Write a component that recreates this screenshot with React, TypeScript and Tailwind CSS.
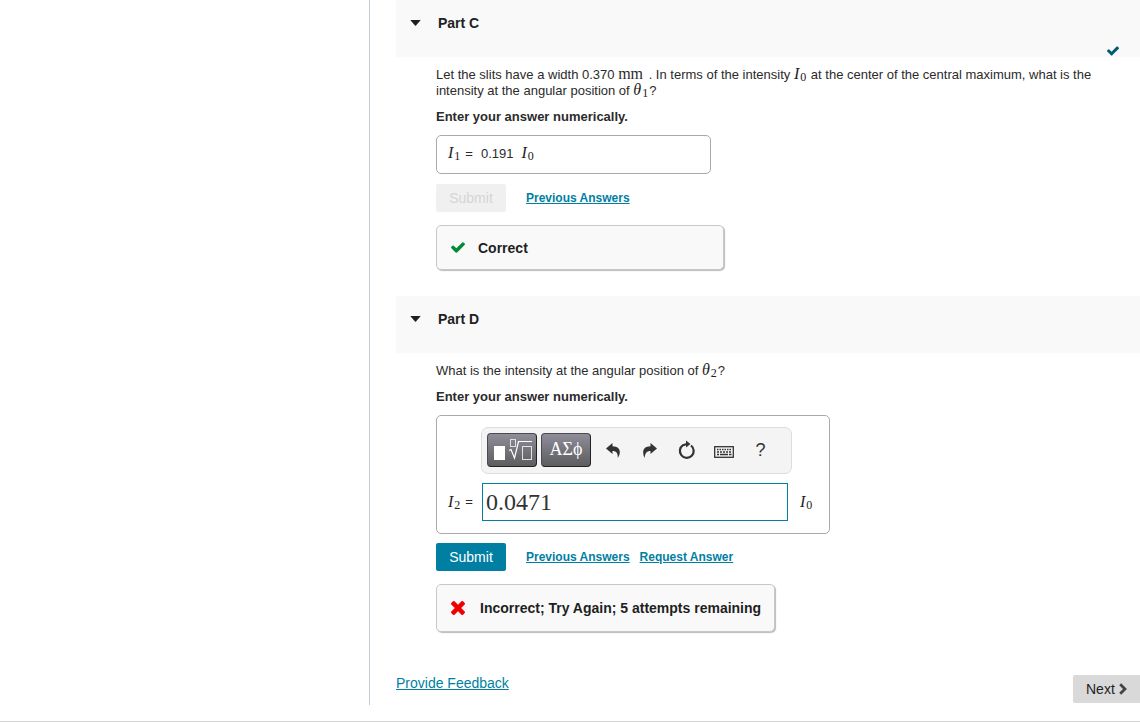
import React, { useState } from 'react';

function Caret() {
  return (
    <svg className="h-[6px] w-[11px] fill-[#1f1f1f]" viewBox="0 0 11 6" aria-hidden="true">
      <path d="M0.3 0H10.7L6 5.4Q5.5 5.9 5 5.4Z" />
    </svg>
  );
}

function Check({ className }: { className: string }) {
  return (
    <svg className={className} viewBox="121 334 1550 1188" aria-hidden="true">
      <path d="M1671 566q0 40-28 68l-724 724-136 136q-28 28-68 28t-68-28l-136-136-362-362q-28-28-28-68t28-68l136-136q28-28 68-28t68 28l294 295 656-657q28-28 68-28t68 28l136 136q28 28 28 68z" />
    </svg>
  );
}

function Cross({ className }: { className: string }) {
  return (
    <svg className={className} viewBox="302 366 1188 1188" aria-hidden="true">
      <path d="M1490 1322q0 40-28 68l-136 136q-28 28-68 28t-68-28l-294-294-294 294q-28 28-68 28t-68-28l-136-136q-28-28-28-68t28-68l294-294-294-294q-28-28-28-68t28-68l136-136q28-28 68-28t68 28l294 294 294-294q28-28 68-28t68 28l136 136q28 28 28 68t-28 68l-294 294 294 294q28 28 28 68z" />
    </svg>
  );
}

function Sym({ name, sub }: { name: string; sub: string }) {
  return (
    <span className="mr-px font-['Liberation_Serif',serif] text-base leading-[0] whitespace-nowrap text-[#222]">
      <i>{name}</i>
      <sub className="bottom-[-2px] ml-px text-[12px]">{sub}</sub>
    </span>
  );
}

function PartHeader({ title, done }: { title: string; done?: boolean }) {
  return (
    <div className="flex min-h-[57px] justify-between bg-[#f9f9f9] pr-[21px] pl-[14px]">
      <h2 className="pt-[13px]">
        <button type="button" aria-expanded="true" className="flex items-center gap-[17px] text-sm font-bold text-[#1f1f1f]">
          <Caret />
          {title}
        </button>
      </h2>
      {done && <Check className="mb-px h-[10px] w-3 self-end fill-[#005a70]" />}
    </div>
  );
}

function Feedback({ className, children }: { className: string; children: React.ReactNode }) {
  return (
    <div
      role="status"
      className={`mt-[13px] flex w-fit items-center rounded-[5px] border border-[#c8c8c8] bg-[#f9f9f9] pr-[13px] pl-[14px] text-sm font-bold text-[#1f1f1f] shadow-[1px_1px_1px_#bbb] ${className}`}
    >
      {children}
    </div>
  );
}

const linkStyle = 'text-[12px] leading-4 font-bold text-[#007fa3] underline';
const toolStyle = 'flex h-[34px] w-[37px] items-center justify-center text-[#333]';
const paletteStyle =
  'flex h-[34px] w-[50px] items-center justify-center rounded-[4px] border border-[#4a4a50] border-r-[#222] border-b-[#222] bg-linear-to-b from-[#8f8d99] to-[#5d5d5f] text-white';

function Toolbar({ onClear }: { onClear: () => void }) {
  return (
    <div role="toolbar" className="flex h-[47px] items-center rounded-[7px] border border-[#ddd] bg-[#f4f4f4] px-[5px] pb-px">
      <button type="button" aria-label="Templates" className={`${paletteStyle} mr-1`}>
        <svg width="42" height="24" viewBox="0 0 42 24" fill="none" stroke="white">
          <rect x="3" y="8" width="11" height="14" fill="white" stroke="none" />
          <rect x="19.500" y="1.500" width="5" height="7" strokeOpacity=".75" />
          <path d="M18 12.500l2-1 3.500 8.500 4-16.500H41" strokeWidth="1.200" />
          <rect x="31.500" y="8.500" width="9" height="13" strokeOpacity=".8" />
        </svg>
      </button>
      <button type="button" aria-label="Greek letters" className={`${paletteStyle} mr-[3px] pb-[2px] font-['Liberation_Serif','DejaVu_Serif',serif] text-lg`}>
        ΑΣϕ
      </button>
      <button type="button" aria-label="Undo" className={toolStyle}>
        <svg width="14" height="15" viewBox="0 0 14 15" fill="currentColor">
          <path d="M0 5.500L6.500 0V3.200C11.500 3.200 14 6 13.800 9.500C13.700 11.500 13 13 11.800 15C12 10.500 10.500 8 6.500 8V11Z" />
        </svg>
      </button>
      <button type="button" aria-label="Redo" className={toolStyle}>
        <svg width="14" height="15" viewBox="0 0 14 15" fill="currentColor">
          <path d="M14 5.500L7.500 0V3.200C2.500 3.200 0 6 .2 9.500C.3 11.500 .6 13 1.600 15C2 10.500 3.500 8 7.500 8V11Z" />
        </svg>
      </button>
      <button type="button" aria-label="Reset" onClick={onClear} className={toolStyle}>
        <svg width="18" height="20" viewBox="0 0 18 20" fill="none" stroke="currentColor">
          <path d="M13 5.500A6.900 6.900 0 1 1 5 5.200L9 4" strokeWidth="2.200" />
          <path d="M8 .5L12.500 4L8 7.500Z" fill="currentColor" stroke="none" />
        </svg>
      </button>
      <button type="button" aria-label="Keyboard shortcuts" className={toolStyle}>
        <svg className="mt-[3px]" width="20" height="12" viewBox="0 0 20 12" fill="none" stroke="currentColor">
          <rect x=".7" y=".7" width="18.600" height="10.600" strokeWidth="1.300" />
          <path d="M3 3.500H17.500" strokeWidth="1.500" strokeDasharray="1.500 1" />
          <path d="M3 6H17.500" strokeWidth="1.500" strokeDasharray="2 1" />
          <path d="M3 8.500H5M6 8.500H14M15 8.500H17.500" strokeWidth="1.500" />
        </svg>
      </button>
      <button type="button" aria-label="Help" className={`${toolStyle} text-lg`}>
        ?
      </button>
    </div>
  );
}

export default function App() {
  const [answer, setAnswer] = useState('0.0471');

  return (
    <div className="bg-white font-['Liberation_Sans',Arial,sans-serif] text-[13px] leading-4 text-[#2b2b2b]">
      <div className="flex">
        <aside className="w-[370px] shrink-0 border-r border-[#c3cbd6]" />

        <main className="min-w-0 flex-1 pl-[26px]">
          <section>
            <PartHeader title="Part C" done />
            <div className="pt-[10px] pr-10 pl-10">
              <p>
                Let the slits have a width 0.370{' '}
                <span className="mr-[2px] font-['Liberation_Serif',serif] text-base leading-[0]">mm</span> . In terms of the intensity{' '}
                <Sym name="I" sub="0" /> at the center of the central maximum, what is the intensity at the angular position of{' '}
                <Sym name="θ" sub="1" />?
              </p>
              <p className="mt-[10px] font-bold">Enter your answer numerically.</p>

              <div className="mt-[10px] flex h-[39px] w-[275px] items-center rounded-[5px] border border-[#aaa] px-[11px] pb-[2px]">
                <Sym name="I" sub="1" />
                <span className="ml-1">=</span>
                <span className="ml-2">0.191</span>
                <span className="ml-2">
                  <Sym name="I" sub="0" />
                </span>
              </div>

              <div className="mt-[10px] flex items-center">
                <button type="button" disabled className="mr-5 h-7 w-[70px] rounded-[2px] bg-[#f0f0f0] text-sm text-[#d5d5d5]">
                  Submit
                </button>
                <a href="#previous-c" className={linkStyle}>Previous Answers</a>
              </div>

              <Feedback className="h-[45px] min-w-[288px]">
                <Check className="mr-[13px] h-[11px] w-[14px] fill-[#038a36]" />
                Correct
              </Feedback>
            </div>
          </section>

          <section className="mt-[26px]">
            <PartHeader title="Part D" />
            <div className="pt-[10px] pr-10 pl-10">
              <p>
                What is the intensity at the angular position of <Sym name="θ" sub="2" />?
              </p>
              <p className="mt-[10px] font-bold">Enter your answer numerically.</p>

              <div className="mt-[10px] grid w-[394px] grid-cols-[33px_311px_auto] gap-y-[9px] rounded-[5px] border border-[#aaa] px-[11px] pt-[11px] pb-3">
                <div className="col-start-2">
                  <Toolbar onClear={() => setAnswer('')} />
                </div>
                <label htmlFor="answer" className="col-start-1 flex items-center gap-1">
                  <Sym name="I" sub="2" />
                  <span>=</span>
                </label>
                <input
                  id="answer"
                  type="text"
                  value={answer}
                  onChange={(e) => setAnswer(e.target.value)}
                  className="ml-px h-[38px] w-[306px] border border-[#007fa3] px-[3px] font-['Liberation_Serif',serif] text-2xl text-[#333] outline-none"
                />
                <span className="flex items-center pl-2">
                  <Sym name="I" sub="0" />
                </span>
              </div>

              <div className="mt-[9px] flex items-center">
                <button type="button" className="mr-5 h-7 w-[70px] rounded-[2px] bg-[#007fa3] text-sm text-white">
                  Submit
                </button>
                <a href="#previous-d" className={`${linkStyle} mr-[10px]`}>Previous Answers</a>
                <a href="#request" className={linkStyle}>Request Answer</a>
              </div>

              <Feedback className="h-12">
                <Cross className="mr-[15px] h-[14px] w-[14px] fill-[#f20000]" />
                Incorrect; Try Again; 5 attempts remaining
              </Feedback>
            </div>
          </section>

          <div className="mt-[43px] mb-[2px] flex items-start justify-between">
            <a href="#feedback" className="text-sm leading-4 text-[#007fa3] underline">Provide Feedback</a>
            <button type="button" className="flex h-7 w-[67px] items-center gap-1 rounded-l-[2px] bg-[#d9d9d9] pl-[13px] text-sm text-[#222]">
              Next
              <svg className="h-3 w-2" viewBox="0 0 8 12" fill="none" stroke="#444" strokeWidth="2.800" aria-hidden="true">
                <path d="M1.200 1.200L6 6L1.200 10.800" />
              </svg>
            </button>
          </div>
        </main>
      </div>
      <footer className="h-[17px] border-b border-[#d3d3d3]" />
    </div>
  );
}
